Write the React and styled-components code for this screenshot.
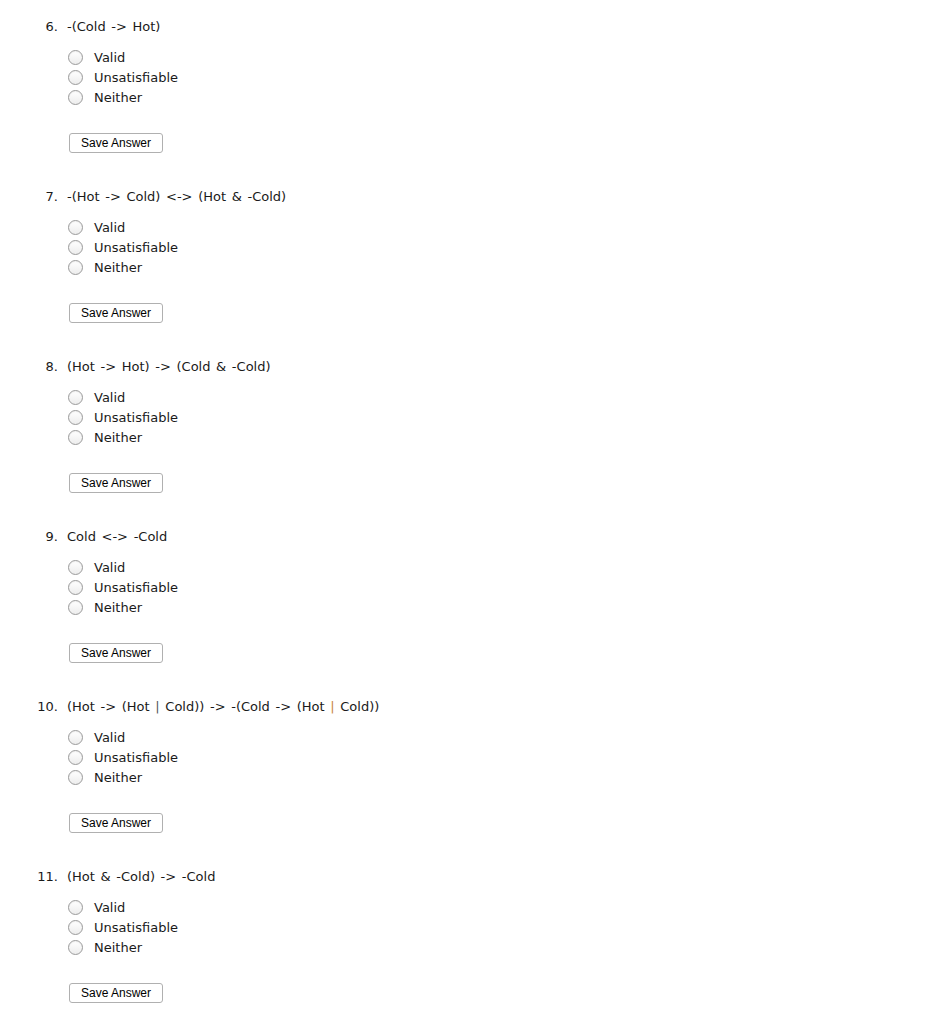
import React from "react";
import styled, { createGlobalStyle } from "styled-components";

const Global = createGlobalStyle`
  html, body { margin: 0; padding: 0; background: #fff; }
  body { font-family: "DejaVu Sans", Verdana, sans-serif; color: #1a1a1a; }
`;

const Page = styled.div`
  padding: 18px 0 0 0;
  display: flex;
  flex-direction: column;
`;

const Question = styled.section`
  height: 170px;
  display: flex;
  flex-direction: column;
`;

const Header = styled.div`
  display: grid;
  grid-template-columns: 58px auto;
  column-gap: 9px;
  font-size: 13px;
  line-height: 18px;
  word-spacing: 1.5px;
`;

const Num = styled.span`
  text-align: right;
`;

const Options = styled.div`
  margin: 11px 0 0 67px;
  display: flex;
  flex-direction: column;
`;

const Option = styled.label`
  display: flex;
  align-items: center;
  height: 20px;
  font-size: 13px;
`;

const Radio = styled.span`
  width: 15px;
  height: 15px;
  box-sizing: border-box;
  border-radius: 50%;
  border: 1px solid #9a9a9a;
  background: linear-gradient(#fff, #ededed);
  box-shadow: inset 0 1px 1px rgba(0, 0, 0, 0.06);
  margin-left: 1px;
  margin-right: 11px;
`;

const Button = styled.button`
  margin: 26px 0 0 69px;
  align-self: flex-start;
  height: 20px;
  padding: 0 11px 0 11px;
  font-family: "Liberation Sans", Arial, sans-serif;
  font-size: 12px;
  color: #000;
  background: #fff;
  border: 1px solid #b0b0b0;
  border-radius: 3px;
  line-height: 18px;
`;

const Pipe = styled.span`
  color: ${(p) => p.$c || "inherit"};
`;

const questions = [
  { n: "6.", t: "-(Cold -> Hot)" },
  { n: "7.", t: "-(Hot -> Cold) <-> (Hot & -Cold)" },
  { n: "8.", t: "(Hot -> Hot) -> (Cold & -Cold)" },
  { n: "9.", t: "Cold <-> -Cold" },
  {
    n: "10.",
    t: (
      <>
        (Hot -&gt; (Hot <Pipe $c="#555">|</Pipe> Cold)) -&gt; -(Cold -&gt; (Hot{" "}
        <Pipe $c="#c8843c">|</Pipe> Cold))
      </>
    ),
  },
  { n: "11.", t: "(Hot & -Cold) -> -Cold" },
];

export default function App() {
  return (
    <Page>
      <Global />
      {questions.map((q) => (
        <Question key={q.n}>
          <Header>
            <Num>{q.n}</Num>
            <span>{q.t}</span>
          </Header>
          <Options>
            {["Valid", "Unsatisfiable", "Neither"].map((o) => (
              <Option key={o}>
                <Radio />
                {o}
              </Option>
            ))}
          </Options>
          <Button>Save Answer</Button>
        </Question>
      ))}
    </Page>
  );
}
